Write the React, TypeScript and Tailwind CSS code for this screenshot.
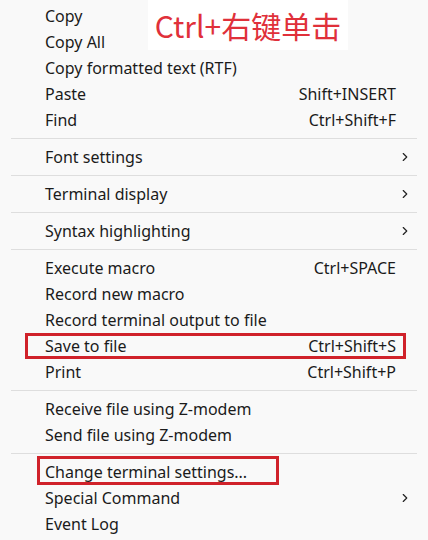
import { ChevronRight } from 'lucide-react';

type Entry =
	| { kind: 'item'; label: string; shortcut?: string; submenu?: boolean; mark?: 'wide' | 'narrow' }
	| { kind: 'sep' };

const entries: Entry[] = [
	{ kind: 'item', label: 'Copy' },
	{ kind: 'item', label: 'Copy All' },
	{ kind: 'item', label: 'Copy formatted text (RTF)' },
	{ kind: 'item', label: 'Paste', shortcut: 'Shift+INSERT' },
	{ kind: 'item', label: 'Find', shortcut: 'Ctrl+Shift+F' },
	{ kind: 'sep' },
	{ kind: 'item', label: 'Font settings', submenu: true },
	{ kind: 'sep' },
	{ kind: 'item', label: 'Terminal display', submenu: true },
	{ kind: 'sep' },
	{ kind: 'item', label: 'Syntax highlighting', submenu: true },
	{ kind: 'sep' },
	{ kind: 'item', label: 'Execute macro', shortcut: 'Ctrl+SPACE' },
	{ kind: 'item', label: 'Record new macro' },
	{ kind: 'item', label: 'Record terminal output to file' },
	{ kind: 'item', label: 'Save to file', shortcut: 'Ctrl+Shift+S', mark: 'wide' },
	{ kind: 'item', label: 'Print', shortcut: 'Ctrl+Shift+P' },
	{ kind: 'sep' },
	{ kind: 'item', label: 'Receive file using Z-modem' },
	{ kind: 'item', label: 'Send file using Z-modem' },
	{ kind: 'sep' },
	{ kind: 'item', label: 'Change terminal settings...', mark: 'narrow' },
	{ kind: 'item', label: 'Special Command', submenu: true },
	{ kind: 'item', label: 'Event Log' },
];

export default function App() {
	return (
		<div
			className="relative w-[428px] h-[540px] overflow-hidden bg-[#f9f9f9] text-[#1b1b1b] text-[16px]"
			style={{ fontFamily: '"Noto Sans", "Noto Sans CJK SC", sans-serif' }}
		>
			<div className="pt-[3px] flex flex-col">
				{entries.map((e, i) =>
					e.kind === 'sep' ? (
						<div key={i} className="h-[11px] flex items-center px-[11px]">
							<div className="h-px w-full bg-[#dedede]" />
						</div>
					) : (
						<div key={i} className="relative h-[26px] flex items-center pl-[45px] pr-[32px]">
							<span className="flex-1 leading-none">{e.label}</span>
							{e.shortcut && <span className="leading-none">{e.shortcut}</span>}
							{e.submenu && (
								<ChevronRight className="absolute right-[16px] w-[14px] h-[14px] text-[#222]" strokeWidth={2} />
							)}
							{/* 빨간 표시 박스 */}
							{e.mark === 'wide' && (
								<div className="absolute left-[25px] right-[22px] top-0 bottom-0 border-[3px] border-[#d0222a]" />
							)}
							{e.mark === 'narrow' && (
								<div className="absolute left-[37px] w-[242px] top-[-3px] bottom-0 border-[3px] border-[#d0222a]" />
							)}
						</div>
					)
				)}
			</div>

			{/* 주석 라벨 */}
			<div className="absolute left-[148px] top-0 h-[50px] w-[200px] bg-white flex items-center justify-center">
				<span
					className="text-[30px] leading-none text-[#e0303a]"
					style={{ fontFamily: '"Noto Sans CJK SC", sans-serif' }}
				>
					Ctrl+右键单击
				</span>
			</div>
		</div>
	);
}
